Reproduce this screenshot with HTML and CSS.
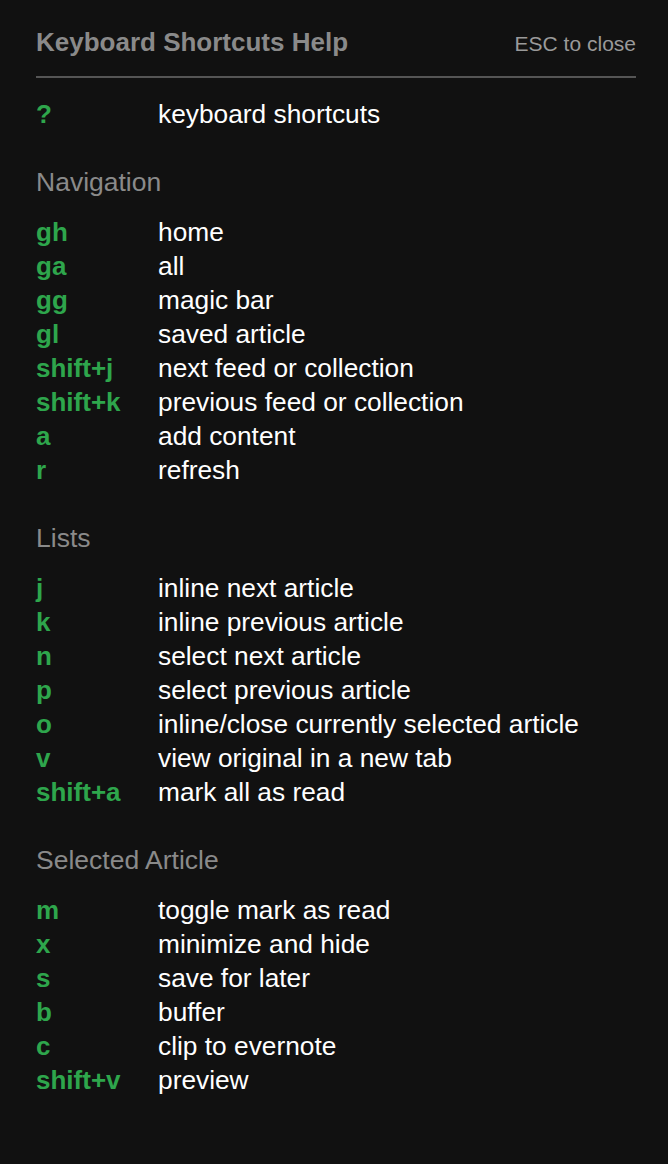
FILE: index.html
```html
<!DOCTYPE html>
<html lang="en">

<head>
    <meta charset="UTF-8">
    <meta name="viewport" content="width=device-width, initial-scale=1.0">
    <title>Keyboard Shortcuts Help</title>
    <link rel="stylesheet" href="styles.css">
</head>

<body>
    <div class="help">
        <div class="header">
            <h1>Keyboard Shortcuts Help</h1>
            <span class="close">ESC to close</span>
        </div>

        <div class="section first">
            <div class="row"><span class="key">?</span><span class="desc">keyboard shortcuts</span></div>
        </div>

        <div class="section">
            <h2>Navigation</h2>
            <div class="row"><span class="key">gh</span><span class="desc">home</span></div>
            <div class="row"><span class="key">ga</span><span class="desc">all</span></div>
            <div class="row"><span class="key">gg</span><span class="desc">magic bar</span></div>
            <div class="row"><span class="key">gl</span><span class="desc">saved article</span></div>
            <div class="row"><span class="key">shift+j</span><span class="desc">next feed or collection</span></div>
            <div class="row"><span class="key">shift+k</span><span class="desc">previous feed or collection</span></div>
            <div class="row"><span class="key">a</span><span class="desc">add content</span></div>
            <div class="row"><span class="key">r</span><span class="desc">refresh</span></div>
        </div>

        <div class="section">
            <h2>Lists</h2>
            <div class="row"><span class="key">j</span><span class="desc">inline next article</span></div>
            <div class="row"><span class="key">k</span><span class="desc">inline previous article</span></div>
            <div class="row"><span class="key">n</span><span class="desc">select next article</span></div>
            <div class="row"><span class="key">p</span><span class="desc">select previous article</span></div>
            <div class="row"><span class="key">o</span><span class="desc">inline/close currently selected article</span></div>
            <div class="row"><span class="key">v</span><span class="desc">view original in a new tab</span></div>
            <div class="row"><span class="key">shift+a</span><span class="desc">mark all as read</span></div>
        </div>

        <div class="section">
            <h2>Selected Article</h2>
            <div class="row"><span class="key">m</span><span class="desc">toggle mark as read</span></div>
            <div class="row"><span class="key">x</span><span class="desc">minimize and hide</span></div>
            <div class="row"><span class="key">s</span><span class="desc">save for later</span></div>
            <div class="row"><span class="key">b</span><span class="desc">buffer</span></div>
            <div class="row"><span class="key">c</span><span class="desc">clip to evernote</span></div>
            <div class="row"><span class="key">shift+v</span><span class="desc">preview</span></div>
        </div>
    </div>
</body>

</html>
```

FILE: styles.css
```css
* {
    margin: 0;
    padding: 0;
    box-sizing: border-box;
    font-family: 'Liberation Sans', Arial, sans-serif;
}

body {
    width: 100%;
    min-height: 100vh;
    background: #111111;
    color: #ffffff;
}

.help {
    padding: 25px 32px 0 36px;
}

.header {
    display: flex;
    justify-content: space-between;
    align-items: baseline;
    padding-bottom: 17px;
    border-bottom: 2px solid #555555;
}

.header h1 {
    font-size: 26px;
    line-height: 34px;
    font-weight: bold;
    color: #8a8a8a;
}

.header .close {
    font-size: 21px;
    color: #9a9a9a;
}

.section {
    margin-top: 34px;
}

.section.first {
    margin-top: 19px;
}

.section h2 {
    font-size: 26.5px;
    line-height: 34px;
    font-weight: normal;
    color: #8a8a8a;
    margin-bottom: 16px;
}

.row {
    display: flex;
    font-size: 26px;
    line-height: 34px;
}

.row .key {
    width: 122px;
    font-weight: bold;
    color: #2ea64c;
}

.row .desc {
    font-size: 26.3px;
    color: #ffffff;
}
```
